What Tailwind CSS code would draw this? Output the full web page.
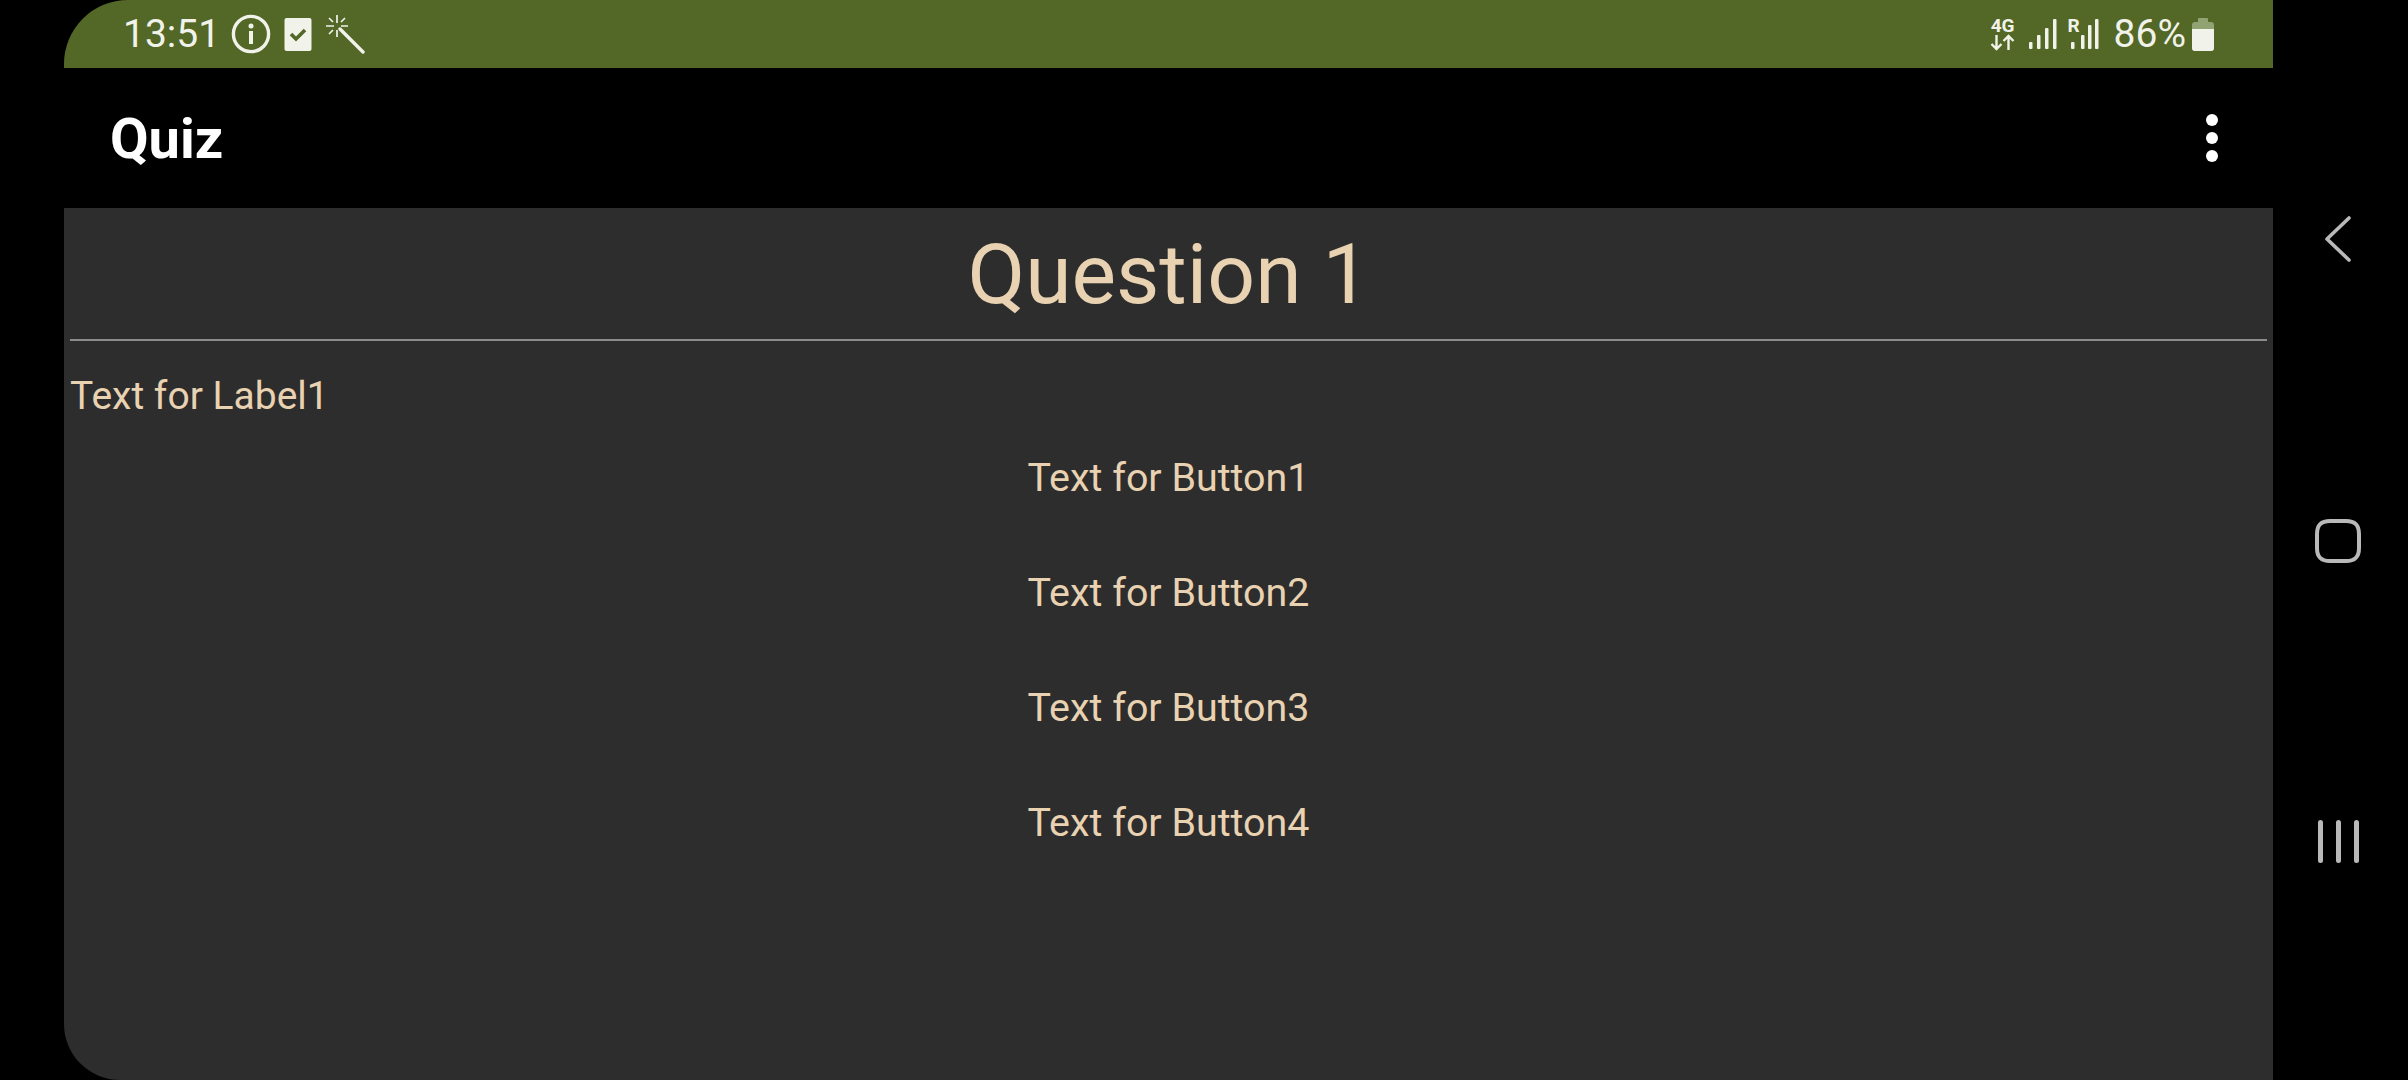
<!DOCTYPE html>
<html lang="en">
<head>
  <meta charset="UTF-8">
  <title>Quiz</title>
  <script src="https://cdn.jsdelivr.net/npm/@tailwindcss/browser@4"></script>
</head>
<body class="bg-black font-['Roboto',sans-serif] overflow-hidden">
<div class="flex w-[2408px] h-[1080px] pl-[64px]">

  <!-- App window -->
  <div class="w-[2209px] h-full flex flex-col bg-black rounded-tl-[64px] rounded-bl-[56px] overflow-hidden">

    <!-- Status bar -->
    <div class="h-[68px] shrink-0 bg-[#536727] flex items-center justify-between text-[#f1f3ea]">
      <div class="flex items-center pl-[59px]">
        <span class="text-[39px] leading-none">13:51</span>
        <svg class="ml-[11px]" width="40" height="40" viewBox="0 0 40 40"><circle cx="20" cy="20" r="17.6" fill="none" stroke="currentColor" stroke-width="3.400"/><circle cx="20" cy="12" r="2.500" fill="currentColor"/><rect x="18" y="17" width="4" height="13" fill="currentColor"/></svg>
        <svg class="ml-[13px]" width="28" height="33" viewBox="0 0 28 33"><rect width="27" height="33" x="0.500" rx="2" fill="currentColor"/><path d="M7 16l5 5 9-9" fill="none" stroke="#536727" stroke-width="3.600"/></svg>
        <svg class="ml-[13px]" width="40" height="40" viewBox="0 0 40 40" fill="none" stroke="currentColor"><path d="M15 15L38 38" stroke-width="3.400" stroke-linecap="round"/><path d="M12 1v8M12 16v7M1 12h8M16 12h7M4 4l4 4M20 4l-4 4M4 20l4-4" stroke-width="1.700"/></svg>
      </div>
      <div class="flex items-center pr-[59px]">
        <div class="w-[26px] flex flex-col items-center">
          <span class="text-[19px] leading-[16px] font-bold">4G</span>
          <svg width="25" height="17" viewBox="0 0 25 17" fill="none" stroke="currentColor" stroke-width="2.400"><path d="M6.500 1v14M1.500 10l5 5 5-5M18.500 16V2M13.500 7l5-5 5 5"/></svg>
        </div>
        <svg class="ml-[13px]" width="28" height="30" viewBox="0 0 28 30" fill="currentColor"><rect x="0" y="23" width="3.500" height="7" rx="1"/><rect x="8" y="16" width="3.500" height="14" rx="1"/><rect x="16" y="9" width="3.500" height="21" rx="1"/><rect x="24" y="0" width="3.500" height="30" rx="1"/></svg>
        <div class="ml-[11px] relative w-[31px] h-[30px]">
          <span class="absolute left-0 -top-[2px] text-[19px] leading-[18px] font-bold">R</span>
          <svg class="absolute inset-0" width="31" height="30" viewBox="0 0 31 30" fill="currentColor"><rect x="3" y="23" width="3.500" height="7" rx="1"/><rect x="13" y="16" width="3.500" height="14" rx="1"/><rect x="20" y="6" width="3.500" height="24" rx="1"/><rect x="27" y="0" width="3.500" height="30" rx="1"/></svg>
        </div>
        <span class="ml-[15px] text-[39px] leading-none">86%</span>
        <svg class="ml-[6px]" width="22" height="33" viewBox="0 0 22 33"><path d="M7 0h8a1 1 0 011 1v3h3a3 3 0 013 3v23a3 3 0 01-3 3H3a3 3 0 01-3-3V7a3 3 0 013-3h3V1a1 1 0 011-1z" fill="#91a273"/><path d="M0 11h22v19a3 3 0 01-3 3H3a3 3 0 01-3-3z" fill="currentColor"/></svg>
      </div>
    </div>

    <!-- Toolbar -->
    <div class="h-[140px] shrink-0 bg-black flex items-center justify-between pl-[46px] pr-[55px]">
      <span class="text-white text-[56px] leading-none font-bold pt-[2px]">Quiz</span>
      <div class="flex flex-col gap-[6px]">
        <span class="w-[12px] h-[12px] rounded-full bg-white"></span>
        <span class="w-[12px] h-[12px] rounded-full bg-white"></span>
        <span class="w-[12px] h-[12px] rounded-full bg-white"></span>
      </div>
    </div>

    <!-- Content -->
    <div class="flex-1 bg-[#2d2d2d] px-[6px] text-[#e9d2b1]">
      <h1 class="h-[133px] pt-[3px] flex items-center justify-center text-[84px] leading-none border-b-2 border-[#8c8c8c]">Question 1</h1>
      <p class="text-[39px] leading-[46px] mt-[32px]">Text for Label1</p>
      <div class="flex flex-col items-center mt-[1px]">
        <button class="h-[115px] text-[39.4px]">Text for Button1</button>
        <button class="h-[115px] text-[39.4px]">Text for Button2</button>
        <button class="h-[115px] text-[39.4px]">Text for Button3</button>
        <button class="h-[115px] text-[39.4px]">Text for Button4</button>
      </div>
    </div>
  </div>

  <!-- Navigation bar -->
  <div class="w-[135px] flex flex-col items-center pt-[216px] pr-[5px] gap-[257px]">
    <svg width="26" height="46" viewBox="0 0 26 46" fill="none" stroke="#b9b9b9" stroke-width="3.600" stroke-linecap="round" stroke-linejoin="round"><path d="M24 2L2 23l22 21"/></svg>
    <svg width="46" height="44" viewBox="0 0 46 44" fill="none" stroke="#b9b9b9" stroke-width="4"><path d="M15 2h16c9 0 13 4 13 13v14c0 9-4 13-13 13H15C6 42 2 38 2 29V15C2 6 6 2 15 2z"/></svg>
    <div class="flex gap-[13px]">
      <span class="w-[5px] h-[43px] rounded-full bg-[#b9b9b9]"></span>
      <span class="w-[5px] h-[43px] rounded-full bg-[#b9b9b9]"></span>
      <span class="w-[5px] h-[43px] rounded-full bg-[#b9b9b9]"></span>
    </div>
  </div>

</div>
</body>
</html>
